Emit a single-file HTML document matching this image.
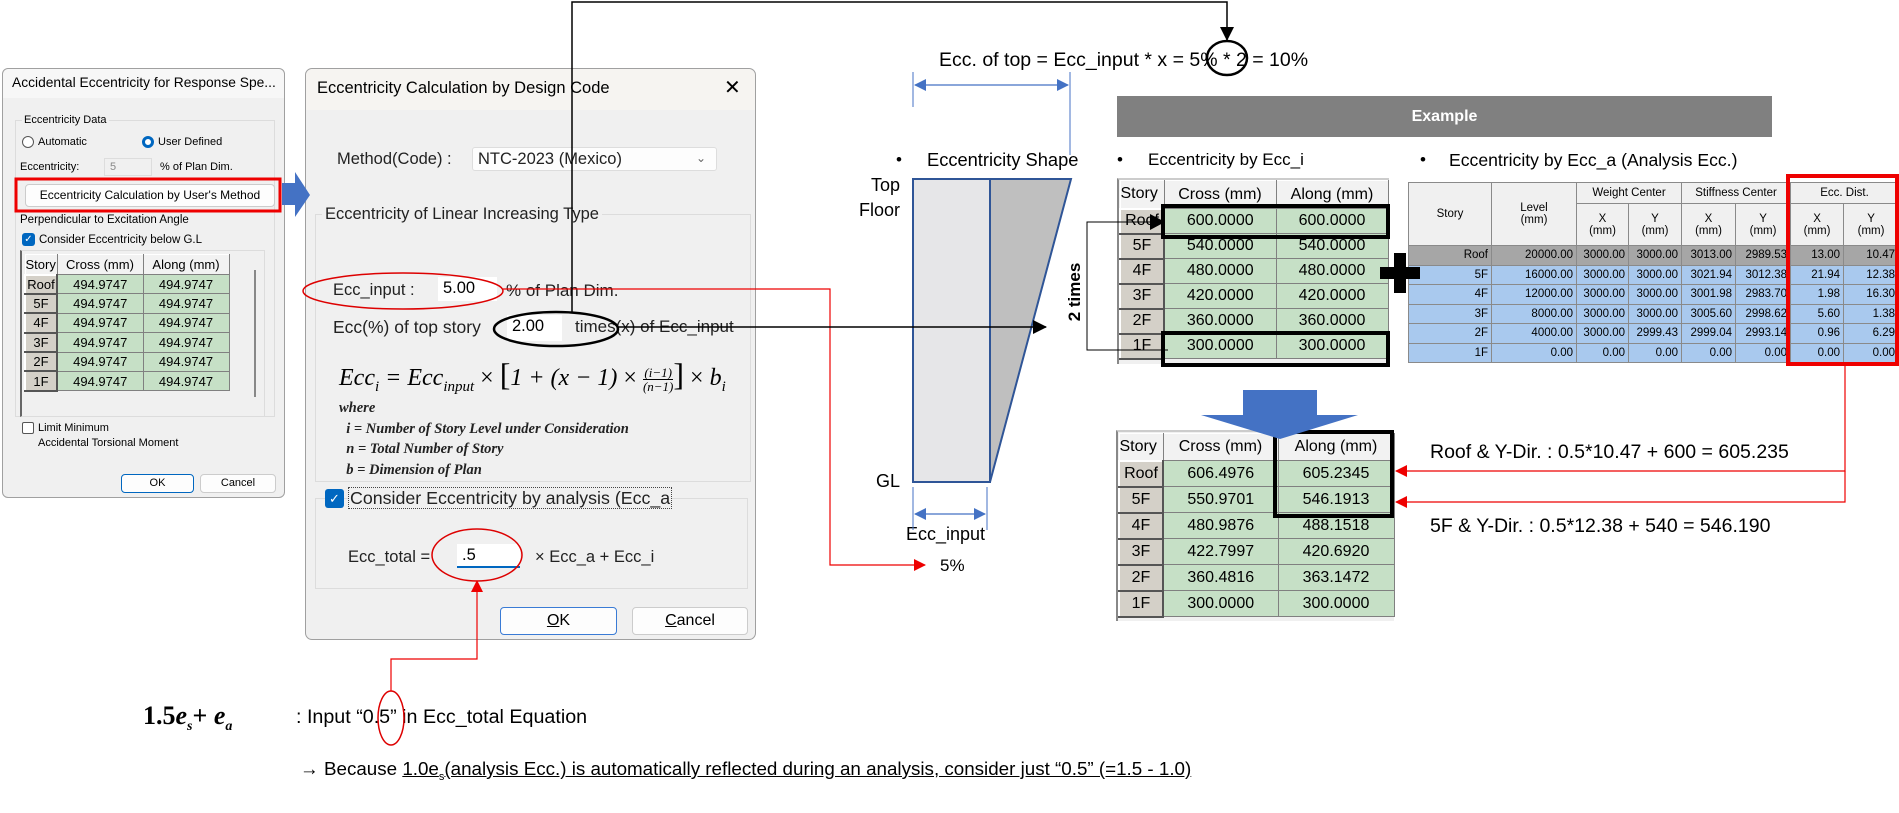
<!DOCTYPE html>
<html><head><meta charset="utf-8"><style>
*{margin:0;padding:0;box-sizing:border-box}
body{width:1899px;height:813px;background:#fff;position:relative;overflow:hidden;font-family:"Liberation Sans",sans-serif;color:#000}
.a{position:absolute;white-space:nowrap}
.t{position:absolute;white-space:nowrap;line-height:20px;transform:translateY(-10px)}
table{border-collapse:collapse;position:absolute;table-layout:fixed}
td{text-align:center;padding:0;overflow:hidden;white-space:nowrap}
.g td.h{background:#f2f2f2;border:1px solid #808080;border-top-color:#fff;border-left-color:#fff}
.g td.r{background:#d4d0c8;border:1px solid #808080;border-top:2px solid #fff;border-left:2px solid #fff;border-right:2px solid #555;border-bottom:2px solid #555}
.g td.d{background:#c6e0c6;border:1px solid #808080}
.b td{border:1px solid #8a8a8a;font-size:11.5px;text-align:right;padding-right:3px;height:19.5px}
.b td.hh{background:#f0f0f0;text-align:center;padding:0}
.b tr.roof td{background:#a6a6a6}
.b tr.bl td{background:#a9c9ee}
.btn{position:absolute;background:#fdfdfd;border:1px solid #ccc;border-radius:4px;text-align:center}
</style></head><body>

<!-- Left dialog -->
<div class="a" style="left:2px;top:68px;width:283px;height:430px;background:#f0f0f0;border:1px solid #a0a0a0;border-radius:6px"></div>
<div class="a" style="left:3px;top:69px;width:281px;height:29px;background:#f7f7f7;border-radius:6px 6px 0 0"></div>
<div class="t" style="left:12px;top:83px;font-size:13.8px">Accidental Eccentricity for Response Spe...</div>
<div class="a" style="left:15px;top:120px;width:260px;height:297px;border:1px solid #dcdcdc"></div>
<div class="t" style="left:22px;top:120px;font-size:11px;background:#f0f0f0;padding:0 2px">Eccentricity Data</div>
<div class="a" style="left:22px;top:136px;width:12px;height:12px;border:1px solid #555;border-radius:50%;background:#fff"></div>
<div class="t" style="left:38px;top:142px;font-size:11px">Automatic</div>
<div class="a" style="left:142px;top:136px;width:12px;height:12px;border:3.5px solid #0067c0;border-radius:50%;background:#fff"></div>
<div class="t" style="left:158px;top:142px;font-size:11px">User Defined</div>
<div class="t" style="left:20px;top:167px;font-size:11px">Eccentricity:</div>
<div class="a" style="left:104px;top:158px;width:48px;height:18px;border:1px solid #ddd;background:#f0f0f0"></div>
<div class="t" style="left:110px;top:167px;font-size:11px;color:#888">5</div>
<div class="t" style="left:160px;top:167px;font-size:11px">% of Plan Dim.</div>
<div class="btn" style="left:25px;top:184px;width:250px;height:23px;font-size:12px;line-height:21px">Eccentricity Calculation by User's Method</div>
<div class="t" style="left:20px;top:220px;font-size:11.5px">Perpendicular to Excitation Angle</div>
<div class="a" style="left:22px;top:233px;width:13px;height:13px;background:#0067c0;border-radius:3px;color:#fff;font-size:10px;line-height:13px;text-align:center">✓</div>
<div class="t" style="left:39px;top:240px;font-size:11.5px">Consider Eccentricity below G.L</div>
<div class="a" style="left:20px;top:250px;width:245px;height:167px;border:1px solid #dcdcdc;border-left:2px solid #666"></div>
<table class="g" style="left:24px;top:254px;font-size:13px;width:204px">
<colgroup><col style="width:32px"><col style="width:86px"><col style="width:86px"></colgroup>
<tr style="height:20px"><td class="h" style="text-align:left">Story</td><td class="h">Cross (mm)</td><td class="h">Along (mm)</td></tr>
<tr style="height:19.4px"><td class="r">Roof</td><td class="d">494.9747</td><td class="d">494.9747</td></tr>
<tr style="height:19.4px"><td class="r">5F</td><td class="d">494.9747</td><td class="d">494.9747</td></tr>
<tr style="height:19.4px"><td class="r">4F</td><td class="d">494.9747</td><td class="d">494.9747</td></tr>
<tr style="height:19.4px"><td class="r">3F</td><td class="d">494.9747</td><td class="d">494.9747</td></tr>
<tr style="height:19.4px"><td class="r">2F</td><td class="d">494.9747</td><td class="d">494.9747</td></tr>
<tr style="height:19.4px"><td class="r">1F</td><td class="d">494.9747</td><td class="d">494.9747</td></tr>
</table>
<div class="a" style="left:254px;top:270px;width:2px;height:127px;background:#888"></div>
<div class="a" style="left:22px;top:422px;width:12px;height:12px;border:1px solid #555;background:#fff;border-radius:2px"></div>
<div class="t" style="left:38px;top:428px;font-size:11px">Limit Minimum</div>
<div class="t" style="left:38px;top:443px;font-size:11px">Accidental Torsional Moment</div>
<div class="btn" style="left:121px;top:474px;width:73px;height:19px;font-size:11px;line-height:17px;border-color:#0067c0">OK</div>
<div class="btn" style="left:200px;top:474px;width:76px;height:19px;font-size:11px;line-height:17px">Cancel</div>

<!-- Dialog 2 -->
<div class="a" style="left:305px;top:68px;width:451px;height:572px;background:#f0f0f0;border:1px solid #a0a0a0;border-radius:7px"></div>
<div class="a" style="left:306px;top:69px;width:449px;height:41px;background:#f6f4f1;border-radius:7px 7px 0 0"></div>
<div class="t" style="left:317px;top:88px;font-size:16.5px">Eccentricity Calculation by Design Code</div>
<div class="t" style="left:724px;top:88px;font-size:20px">✕</div>
<div class="t" style="left:337px;top:159px;font-size:16.5px;color:#222">Method(Code) :</div>
<div class="a" style="left:472px;top:147px;width:245px;height:24px;background:#fdfdfd;border:1px solid #ddd;border-radius:3px"></div>
<div class="t" style="left:478px;top:159px;font-size:16.5px;color:#222">NTC-2023 (Mexico)</div>
<div class="t" style="left:696px;top:158px;font-size:12px;color:#666">⌄</div>
<div class="a" style="left:315px;top:214px;width:436px;height:268px;border:1px solid #dcdcdc"></div>
<div class="t" style="left:322px;top:214px;font-size:16.5px;background:#f0f0f0;padding:0 3px;color:#222">Eccentricity of Linear Increasing Type</div>
<div class="t" style="left:333px;top:290px;font-size:16.5px;color:#222">Ecc_input :</div>
<div class="a" style="left:438px;top:277px;width:59px;height:24px;background:#fff"></div>
<div class="t" style="left:443px;top:288px;font-size:16.5px">5.00</div>
<div class="t" style="left:506px;top:291px;font-size:17px;color:#222">% of Plan Dim.</div>
<div class="t" style="left:333px;top:327px;font-size:17.5px;color:#222">Ecc(%) of top story</div>
<div class="a" style="left:507px;top:315px;width:55px;height:26px;background:#fff"></div>
<div class="t" style="left:512px;top:326px;font-size:16.5px">2.00</div>
<div class="t" style="left:575px;top:327px;font-size:17px;color:#222">times(x) of Ecc_input</div>
<div class="a" style="left:339px;top:356px;font-family:'Liberation Serif',serif;font-style:italic;font-size:24px;line-height:36px">Ecc<sub style="font-size:15px">i</sub> = Ecc<sub style="font-size:15px">input</sub> <span style="font-style:normal">×</span> <span style="font-size:32px;font-style:normal">[</span>1 + (x − 1) <span style="font-style:normal">×</span> <span style="display:inline-block;vertical-align:middle;text-align:center;font-size:13px;line-height:13px"><span style="display:block;border-bottom:1px solid #000">(i−1)</span><span style="display:block">(n−1)</span></span><span style="font-size:32px;font-style:normal">]</span> <span style="font-style:normal">×</span> b<sub style="font-size:15px">i</sub></div>
<div class="a" style="left:339px;top:398px;font-family:'Liberation Serif',serif;font-style:italic;font-weight:bold;font-size:14.5px;line-height:20.5px;color:#222">where<br>&nbsp;&nbsp;i = Number of Story Level under Consideration<br>&nbsp;&nbsp;n = Total Number of Story<br>&nbsp;&nbsp;b = Dimension of Plan</div>
<div class="a" style="left:315px;top:498px;width:433px;height:91px;border:1px solid #dcdcdc"></div>
<div class="a" style="left:325px;top:489px;width:19px;height:19px;background:#0067c0;border-radius:3px;color:#fff;font-size:13px;line-height:19px;text-align:center">✓</div>
<div class="t" style="left:349px;top:498px;font-size:17.8px;background:#f0f0f0;outline:1px dotted #444;padding:0 1px;color:#222">Consider Eccentricity by analysis (Ecc_a</div>
<div class="t" style="left:348px;top:557px;font-size:16.5px;color:#222">Ecc_total =</div>
<div class="a" style="left:457px;top:544px;width:63px;height:24px;background:#fff;border-bottom:2px solid #0067c0"></div>
<div class="t" style="left:462px;top:555px;font-size:16.5px">.5</div>
<div class="t" style="left:535px;top:557px;font-size:16.5px;color:#222">× Ecc_a + Ecc_i</div>
<div class="btn" style="left:500px;top:607px;width:117px;height:28px;font-size:16px;line-height:26px;border-color:#3a7bd5"><u>O</u>K</div>
<div class="btn" style="left:632px;top:607px;width:116px;height:28px;font-size:16px;line-height:26px"><u>C</u>ancel</div>

<!-- Eccentricity shape texts -->
<div class="t" style="left:939px;top:60px;font-size:19.5px">Ecc. of top = Ecc_input * x = 5% * 2 = 10%</div>
<div class="t" style="left:896px;top:160px;font-size:17px">•</div>
<div class="t" style="left:927px;top:160px;font-size:18.3px">Eccentricity Shape</div>
<div class="t" style="left:850px;top:185px;width:50px;text-align:right;font-size:18px">Top</div>
<div class="t" style="left:850px;top:210px;width:50px;text-align:right;font-size:18px">Floor</div>
<div class="t" style="left:876px;top:481px;font-size:18px">GL</div>
<div class="t" style="left:906px;top:534px;font-size:18px">Ecc_input</div>
<div class="t" style="left:940px;top:566px;font-size:17px">5%</div>
<div class="a" style="left:1040px;top:282px;width:70px;line-height:20px;font-size:17px;font-weight:bold;transform:rotate(-90deg);text-align:center">2 times</div>

<!-- Example -->
<div class="a" style="left:1117px;top:96px;width:655px;height:41px;background:#808080;color:#fff;font-weight:bold;font-size:16px;line-height:41px;text-align:center">Example</div>
<div class="t" style="left:1117px;top:160px;font-size:17px">•</div>
<div class="t" style="left:1148px;top:160px;font-size:17px">Eccentricity by Ecc_i</div>
<div class="t" style="left:1420px;top:160px;font-size:17px">•</div>
<div class="t" style="left:1449px;top:160px;font-size:17.6px">Eccentricity by Ecc_a (Analysis Ecc.)</div>

<div class="a" style="left:1117px;top:178px;width:272px;height:186px;background:#f0f0f0;border-left:2px solid #888;border-top:2px solid #ccc"></div>
<table class="g" style="left:1119px;top:180px;font-size:16px;width:268px">
<colgroup><col style="width:44px"><col style="width:112px"><col style="width:112px"></colgroup>
<tr style="height:28px"><td class="h" style="text-align:left">Story</td><td class="h">Cross (mm)</td><td class="h">Along (mm)</td></tr>
<tr style="height:25px"><td class="r">Roof</td><td class="d">600.0000</td><td class="d">600.0000</td></tr>
<tr style="height:25px"><td class="r">5F</td><td class="d">540.0000</td><td class="d">540.0000</td></tr>
<tr style="height:25px"><td class="r">4F</td><td class="d">480.0000</td><td class="d">480.0000</td></tr>
<tr style="height:25px"><td class="r">3F</td><td class="d">420.0000</td><td class="d">420.0000</td></tr>
<tr style="height:25px"><td class="r">2F</td><td class="d">360.0000</td><td class="d">360.0000</td></tr>
<tr style="height:25px"><td class="r">1F</td><td class="d">300.0000</td><td class="d">300.0000</td></tr>
</table>

<table class="b" style="left:1408px;top:182px;width:490px">
<colgroup><col style="width:83px"><col style="width:85px"><col style="width:52px"><col style="width:53px"><col style="width:54px"><col style="width:55px"><col style="width:53px"><col style="width:55px"></colgroup>
<tr style="height:21px"><td class="hh" rowspan="2">Story</td><td class="hh" rowspan="2">Level<br>(mm)</td><td class="hh" colspan="2">Weight Center</td><td class="hh" colspan="2">Stiffness Center</td><td class="hh" colspan="2">Ecc. Dist.</td></tr>
<tr style="height:42px"><td class="hh">X<br>(mm)</td><td class="hh">Y<br>(mm)</td><td class="hh">X<br>(mm)</td><td class="hh">Y<br>(mm)</td><td class="hh">X<br>(mm)</td><td class="hh">Y<br>(mm)</td></tr>
<tr class="roof"><td>Roof</td><td>20000.00</td><td>3000.00</td><td>3000.00</td><td>3013.00</td><td>2989.53</td><td>13.00</td><td>10.47</td></tr>
<tr class="bl"><td>5F</td><td>16000.00</td><td>3000.00</td><td>3000.00</td><td>3021.94</td><td>3012.38</td><td>21.94</td><td>12.38</td></tr>
<tr class="bl"><td>4F</td><td>12000.00</td><td>3000.00</td><td>3000.00</td><td>3001.98</td><td>2983.70</td><td>1.98</td><td>16.30</td></tr>
<tr class="bl"><td>3F</td><td>8000.00</td><td>3000.00</td><td>3000.00</td><td>3005.60</td><td>2998.62</td><td>5.60</td><td>1.38</td></tr>
<tr class="bl"><td>2F</td><td>4000.00</td><td>3000.00</td><td>2999.43</td><td>2999.04</td><td>2993.14</td><td>0.96</td><td>6.29</td></tr>
<tr class="bl"><td>1F</td><td>0.00</td><td>0.00</td><td>0.00</td><td>0.00</td><td>0.00</td><td>0.00</td><td>0.00</td></tr>
</table>

<div class="a" style="left:1116px;top:430px;width:278px;height:191px;background:#f0f0f0;border-left:2px solid #888;border-top:2px solid #ccc"></div>
<table class="g" style="left:1118px;top:433px;font-size:16px;width:275px">
<colgroup><col style="width:44px"><col style="width:115px"><col style="width:116px"></colgroup>
<tr style="height:27px"><td class="h" style="text-align:left">Story</td><td class="h">Cross (mm)</td><td class="h">Along (mm)</td></tr>
<tr style="height:26px"><td class="r">Roof</td><td class="d">606.4976</td><td class="d">605.2345</td></tr>
<tr style="height:26px"><td class="r">5F</td><td class="d">550.9701</td><td class="d">546.1913</td></tr>
<tr style="height:26px"><td class="r">4F</td><td class="d">480.9876</td><td class="d">488.1518</td></tr>
<tr style="height:26px"><td class="r">3F</td><td class="d">422.7997</td><td class="d">420.6920</td></tr>
<tr style="height:26px"><td class="r">2F</td><td class="d">360.4816</td><td class="d">363.1472</td></tr>
<tr style="height:26px"><td class="r">1F</td><td class="d">300.0000</td><td class="d">300.0000</td></tr>
</table>
<div class="t" style="left:1430px;top:452px;font-size:19.5px">Roof &amp; Y-Dir. : 0.5*10.47 + 600 = 605.235</div>
<div class="t" style="left:1430px;top:526px;font-size:19.5px">5F &amp; Y-Dir. : 0.5*12.38 + 540 = 546.190</div>

<!-- Bottom text -->
<div class="a" style="left:143px;top:700px;font-family:'Liberation Serif',serif;font-weight:bold;font-size:26px;line-height:32px">1.5<i>e<sub style="font-size:14px">s</sub></i>+ <i>e<sub style="font-size:14px">a</sub></i></div>
<div class="t" style="left:296px;top:717px;font-size:19.7px">:  Input “0.5” in Ecc_total Equation</div>
<div class="t" style="left:300px;top:769px;font-size:18.8px">→ Because <u>1.0e<sub style="font-size:11px">s</sub>(analysis Ecc.) is automatically reflected during an analysis, consider just “0.5” (=1.5 - 1.0)</u></div>

<!-- SVG overlay -->
<svg class="a" style="left:0;top:0" width="1899" height="813" viewBox="0 0 1899 813">
<defs>
<marker id="ar" markerWidth="12" markerHeight="12" refX="11" refY="6" orient="auto" markerUnits="userSpaceOnUse"><path d="M0,0 L12,6 L0,12z" fill="#e00"/></marker>
<marker id="abl" markerWidth="12" markerHeight="12" refX="11" refY="6" orient="auto-start-reverse" markerUnits="userSpaceOnUse"><path d="M0,0 L12,6 L0,12z" fill="#4472c4"/></marker>
<marker id="abk" markerWidth="14" markerHeight="14" refX="13" refY="7" orient="auto" markerUnits="userSpaceOnUse"><path d="M0,0 L14,7 L0,14z" fill="#000"/></marker>
</defs>
<rect x="16" y="179" width="264" height="32" fill="none" stroke="#e00" stroke-width="3"/>
<polygon points="282,183 295,183 295,172 310,195 295,217 295,205 282,205" fill="#4472c4"/>
<ellipse cx="403" cy="291" rx="100" ry="18" fill="none" stroke="#d00" stroke-width="1.5"/>
<ellipse cx="556" cy="329" rx="62" ry="17" fill="none" stroke="#000" stroke-width="2.5"/>
<ellipse cx="477" cy="555" rx="45" ry="26" fill="none" stroke="#d00" stroke-width="1.5"/>
<ellipse cx="1227" cy="58" rx="20" ry="17" fill="none" stroke="#000" stroke-width="2.5"/>
<ellipse cx="391" cy="718" rx="13" ry="27" fill="none" stroke="#d00" stroke-width="1.5"/>
<polyline points="503,289 830,289 830,565 925,565" fill="none" stroke="#e00" stroke-width="1.2" marker-end="url(#ar)"/>
<polyline points="391,691 391,659 477,659 477,581" fill="none" stroke="#e00" stroke-width="1.2" marker-end="url(#ar)"/>
<polyline points="1845,365 1845,471 1396,471" fill="none" stroke="#e00" stroke-width="1.2" marker-end="url(#ar)"/>
<polyline points="1845,471 1845,502 1396,502" fill="none" stroke="#e00" stroke-width="1.2" marker-end="url(#ar)"/>
<rect x="1788" y="176" width="109" height="188" fill="none" stroke="#e00" stroke-width="4"/>
<polyline points="572,312 572,2 1227,2 1227,40" fill="none" stroke="#000" stroke-width="1.5" marker-end="url(#abk)"/>
<polyline points="1165,222 1087,222 1087,350 1168,350" fill="none" stroke="#000" stroke-width="1"/>
<path d="M1150,214 L1165,222 L1150,230z" fill="#000"/>
<rect x="913" y="179" width="77" height="303" fill="#e6e6e8" stroke="#2f5597" stroke-width="2"/>
<polygon points="990,179 1071,179 990,482" fill="#bfbfbf" stroke="#2f5597" stroke-width="2"/>
<line x1="618" y1="327" x2="1046" y2="327" stroke="#000" stroke-width="1.5" marker-end="url(#abk)"/>
<line x1="913" y1="72" x2="913" y2="107" stroke="#4472c4" stroke-width="1"/>
<line x1="1070" y1="72" x2="1070" y2="155" stroke="#4472c4" stroke-width="1"/>
<line x1="915" y1="85" x2="1068" y2="85" stroke="#4472c4" stroke-width="1.2" marker-start="url(#abl)" marker-end="url(#abl)"/>
<line x1="913" y1="487" x2="913" y2="530" stroke="#4472c4" stroke-width="1"/>
<line x1="987" y1="487" x2="987" y2="530" stroke="#4472c4" stroke-width="1"/>
<line x1="915" y1="514" x2="985" y2="514" stroke="#4472c4" stroke-width="1.2" marker-start="url(#abl)" marker-end="url(#abl)"/>
<rect x="1163" y="206" width="225" height="31" fill="none" stroke="#000" stroke-width="4"/>
<rect x="1163" y="333" width="225" height="32" fill="none" stroke="#000" stroke-width="4"/>
<rect x="1275" y="432" width="117" height="84" fill="none" stroke="#000" stroke-width="4"/>
<rect x="1380" y="267" width="40" height="12" fill="#000"/>
<rect x="1394" y="253" width="12" height="40" fill="#000"/>
<polygon points="1243,390 1317,390 1317,415 1358,415 1280,439 1201,415 1243,415" fill="#4472c4"/>
</svg>
</body></html>
